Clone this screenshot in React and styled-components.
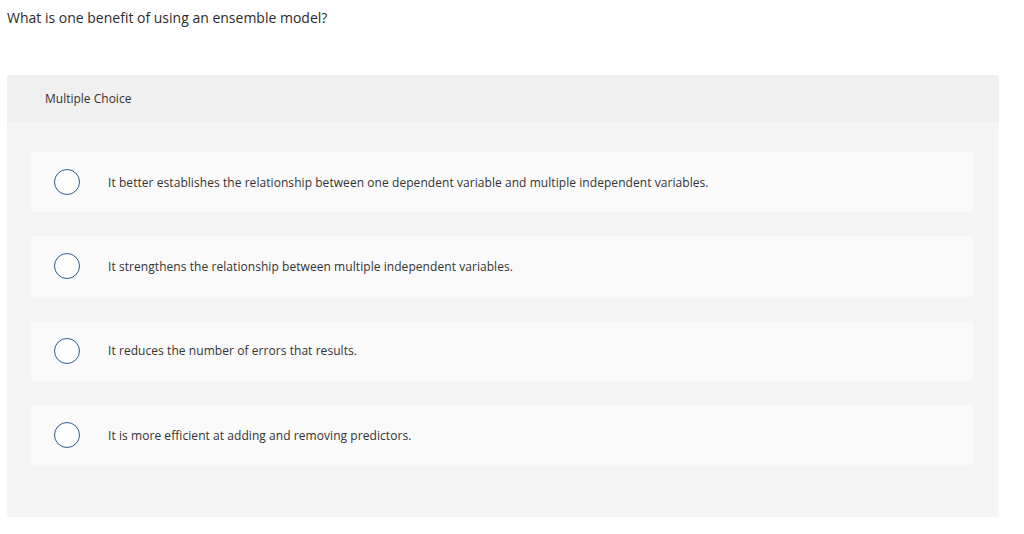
import React from 'react';
import styled, { createGlobalStyle } from 'styled-components';

const GlobalStyle = createGlobalStyle`
  html, body {
    margin: 0;
    padding: 0;
    background: #ffffff;
  }
  body {
    font-family: "Open Sans", "Liberation Sans", sans-serif;
    color: #333333;
  }
`;

const options = [
  'It better establishes the relationship between one dependent variable and multiple independent variables.',
  'It strengthens the relationship between multiple independent variables.',
  'It reduces the number of errors that results.',
  'It is more efficient at adding and removing predictors.',
];

const App = () => {
  return (
    <Page>
      <GlobalStyle />
      <Question>What is one benefit of using an ensemble model?</Question>
      <Panel>
        <PanelHeader>Multiple Choice</PanelHeader>
        <OptionList>
          {options.map((text, i) => (
            <Option key={i}>
              <Radio type="radio" name="answer" />
              <OptionText>{text}</OptionText>
            </Option>
          ))}
        </OptionList>
      </Panel>
    </Page>
  );
};

const Page = styled.main`
  padding: 8px 25px 0 7px;
`;

const Question = styled.p`
  margin: 0;
  font-size: 14px;
  line-height: 19px;
  color: #2b2b2b;
`;

const Panel = styled.section`
  margin-top: 48px;
  width: 992px;
  background: #f5f5f5;
  border-radius: 3px;
  overflow: hidden;
`;

const PanelHeader = styled.header`
  height: 47px;
  display: flex;
  align-items: center;
  padding-left: 38px;
  background: #f0f0f0;
  font-size: 12px;
  color: #333333;
`;

const OptionList = styled.ol`
  list-style: none;
  margin: 0;
  padding: 30px 26px 52px 24px;
  display: flex;
  flex-direction: column;
  gap: 24px;
`;

const Option = styled.li`
  height: 60.33px;
  display: flex;
  align-items: center;
  background: #fafafa;
  border-radius: 3px;
  padding-left: 23px;
`;

const Radio = styled.input`
  appearance: none;
  margin: 0;
  width: 26px;
  height: 26px;
  border: 1px solid #2e5a8e;
  border-radius: 50%;
  background: #ffffff;
  box-sizing: border-box;
  flex-shrink: 0;
`;

const OptionText = styled.span`
  margin-left: 28px;
  font-size: 12px;
  letter-spacing: 0.06px;
  color: #333333;
`;

export default App;
